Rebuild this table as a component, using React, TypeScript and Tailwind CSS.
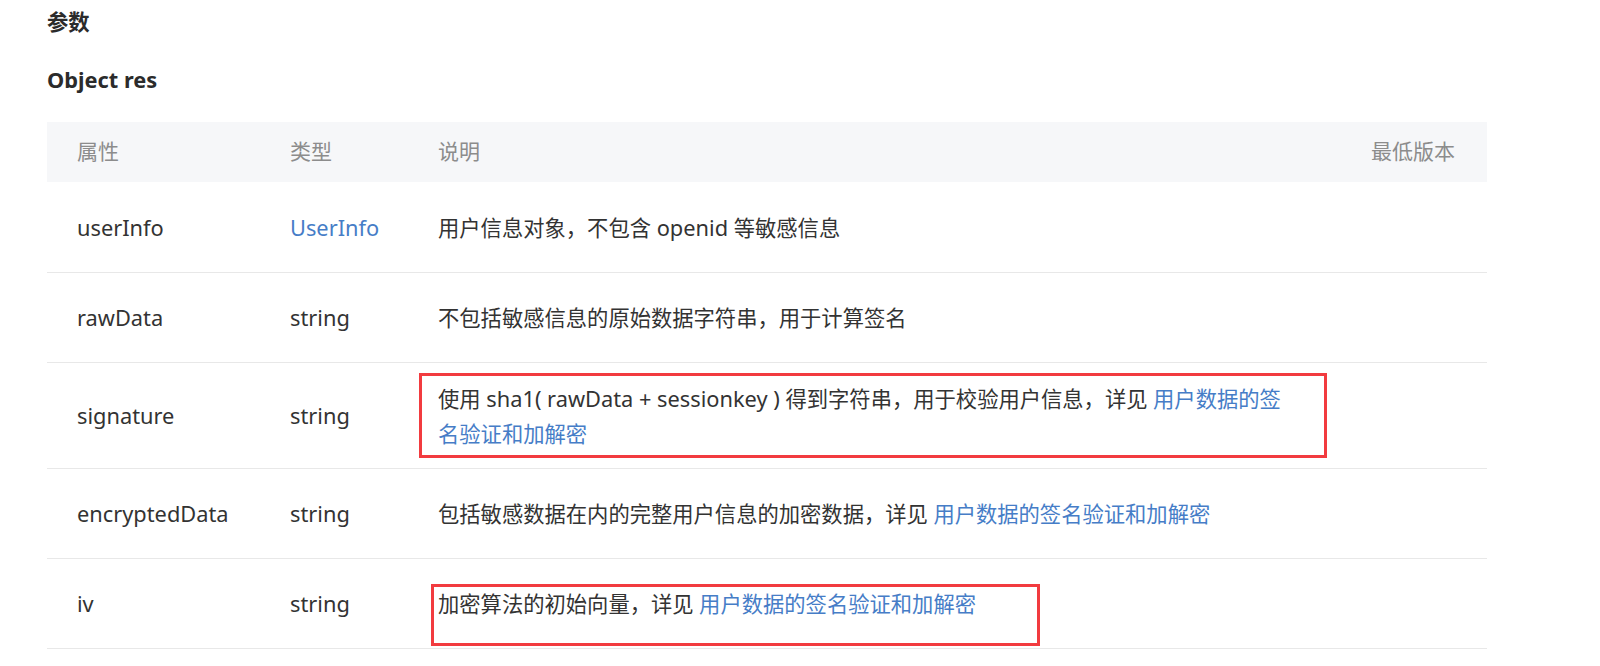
import React from "react";

const font = { fontFamily: '"Noto Sans", "Noto Sans CJK SC", sans-serif' };

function Link({ children }: { children: React.ReactNode }) {
  return <span className="text-[#467dc7]">{children}</span>;
}

function L({ children }: { children: React.ReactNode }) {
  return <span className="text-[21.8px]">{children}</span>;
}

type Row = { name: string; type: React.ReactNode; desc: React.ReactNode; tall?: boolean };

const rows: Row[] = [
  {
    name: "userInfo",
    type: <Link>UserInfo</Link>,
    desc: (
      <>
        用户信息对象，不包含<L> openid </L>等敏感信息
      </>
    ),
  },
  { name: "rawData", type: "string", desc: <>不包括敏感信息的原始数据字符串，用于计算签名</> },
  {
    name: "signature",
    type: "string",
    tall: true,
    desc: (
      <>
        使用<L> sha1( rawData + sessionkey ) </L>得到字符串，用于校验用户信息，详见 <Link>用户数据的签</Link>
        <br />
        <Link>名验证和加解密</Link>
      </>
    ),
  },
  {
    name: "encryptedData",
    type: "string",
    desc: (
      <>
        包括敏感数据在内的完整用户信息的加密数据，详见 <Link>用户数据的签名验证和加解密</Link>
      </>
    ),
  },
  {
    name: "iv",
    type: "string",
    desc: (
      <>
        加密算法的初始向量，详见 <Link>用户数据的签名验证和加解密</Link>
      </>
    ),
  },
];

const cols = "grid grid-cols-[213px_148px_933px_146px]";

export default function App() {
  return (
    <div
      className="relative w-[1600px] h-[666px] overflow-hidden bg-white pl-[47px] pt-[7px] text-[21.3px] text-[#333333]"
      style={font}
    >
      <div className="font-bold leading-[30px] text-[#2b2b2b]">参数</div>
      <div className="mt-[28px] font-bold leading-[30px] text-[#2b2b2b]">
        <span className="text-[21.8px]">Object res</span>
      </div>

      <div className="mt-[27px] w-[1440px]">
        <div className={`${cols} h-[60px] items-center bg-[#f6f7f9] text-[#8c8c8c] text-[21px]`}>
          <div className="pl-[30px]">属性</div>
          <div className="pl-[30px]">类型</div>
          <div className="pl-[30px]">说明</div>
          <div className="pl-[30px]">最低版本</div>
        </div>
        {rows.map((r, i) => (
          <div
            key={r.name}
            className={`${cols} items-center border-b border-[#e8e8e8] leading-[35px] ${
              r.tall ? "min-h-[106px] py-[17px]" : i === 0 ? "min-h-[91px]" : "min-h-[90px]"
            }`}
          >
            <div className="pl-[30px] text-[21.8px]">{r.name}</div>
            <div className="pl-[30px] text-[21.8px]">{r.type}</div>
            <div className="pl-[30px] pr-[20px]">{r.desc}</div>
            <div className="pl-[30px]"></div>
          </div>
        ))}
      </div>

      <div className="pointer-events-none absolute left-[419px] top-[373px] h-[85px] w-[908px] border-[3px] border-[#f23b3f]" />
      <div className="pointer-events-none absolute left-[431px] top-[584px] h-[62px] w-[609px] border-[3px] border-[#f23b3f]" />
    </div>
  );
}
